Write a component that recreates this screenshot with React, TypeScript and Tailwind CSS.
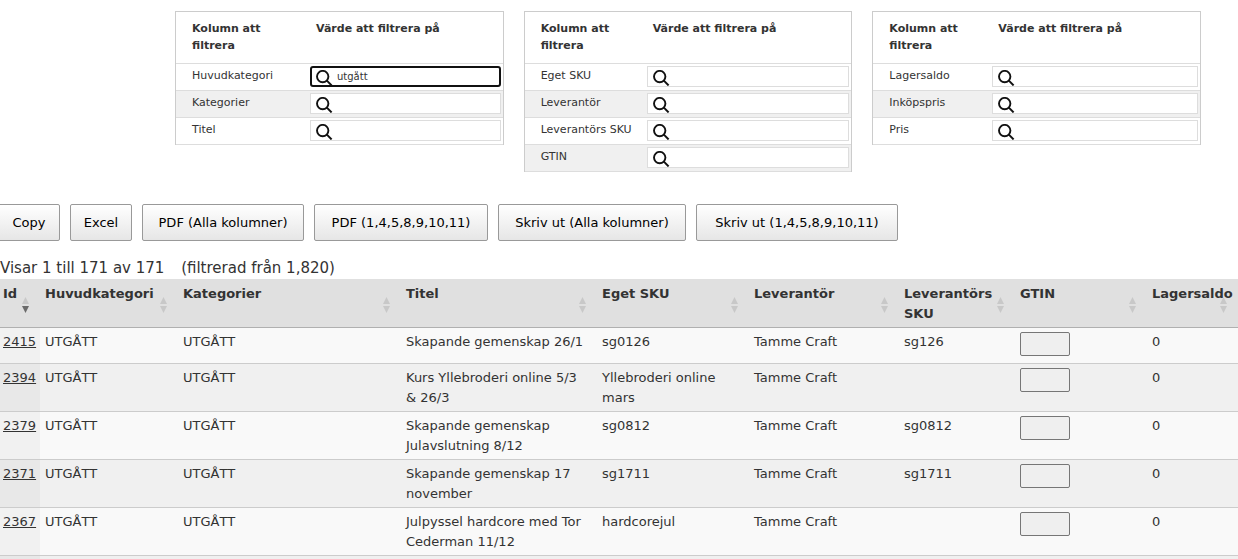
import clsx from 'clsx';

interface FilterField {
  id: string;
  label: string;
  value?: string;
  active?: boolean;
}

interface FilterTableProps {
  labelCol: string;
  fields: FilterField[];
}

interface Product {
  id: string;
  title: string;
  sku: string;
  supplierSku: string;
}

const mainFilters: FilterField[] = [
  { id: 'huvudkategori', label: 'Huvudkategori', value: 'utgått', active: true },
  { id: 'kategorier', label: 'Kategorier' },
  { id: 'titel', label: 'Titel' },
];

const skuFilters: FilterField[] = [
  { id: 'eget-sku', label: 'Eget SKU' },
  { id: 'leverantor', label: 'Leverantör' },
  { id: 'leverantors-sku', label: 'Leverantörs SKU' },
  { id: 'gtin', label: 'GTIN' },
];

const priceFilters: FilterField[] = [
  { id: 'lagersaldo', label: 'Lagersaldo' },
  { id: 'inkopspris', label: 'Inköpspris' },
  { id: 'pris', label: 'Pris' },
];

const exportButtons = [
  { label: 'Copy', width: 'min-w-[62px]' },
  { label: 'Excel', width: 'min-w-[62px]' },
  { label: 'PDF (Alla kolumner)', width: 'min-w-[162px]' },
  { label: 'PDF (1,4,5,8,9,10,11)', width: 'min-w-[174px]' },
  { label: 'Skriv ut (Alla kolumner)', width: 'min-w-[188px]' },
  { label: 'Skriv ut (1,4,5,8,9,10,11)', width: 'min-w-[202px]' },
];

const columns = [
  { label: 'Id', width: 'w-[42px]' },
  { label: 'Huvudkategori', width: 'w-[138px]' },
  { label: 'Kategorier', width: 'w-[223px]' },
  { label: 'Titel', width: 'w-[196px]' },
  { label: 'Eget SKU', width: 'w-[152px]' },
  { label: 'Leverantör', width: 'w-[150px]' },
  { label: 'Leverantörs SKU', width: 'w-[116px]' },
  { label: 'GTIN', width: 'w-[132px]' },
  { label: 'Lagersaldo', width: 'w-[91px]' },
];

const products: Product[] = [
  { id: '2415', title: 'Skapande gemenskap 26/1', sku: 'sg0126', supplierSku: 'sg126' },
  { id: '2394', title: 'Kurs Yllebroderi online 5/3 & 26/3', sku: 'Yllebroderi online mars', supplierSku: '' },
  { id: '2379', title: 'Skapande gemenskap Julavslutning 8/12', sku: 'sg0812', supplierSku: 'sg0812' },
  { id: '2371', title: 'Skapande gemenskap 17 november', sku: 'sg1711', supplierSku: 'sg1711' },
  { id: '2367', title: 'Julpyssel hardcore med Tor Cederman 11/12', sku: 'hardcorejul', supplierSku: '' },
];

function SearchIcon() {
  return (
    <svg
      className="pointer-events-none absolute top-1 left-1.5"
      width="17"
      height="16"
      viewBox="0 0 17 16"
      fill="none"
      stroke="#111"
    >
      <circle cx="6.7" cy="6.6" r="5.7" strokeWidth="1.9" />
      <path d="M10.6 10.4l5 5" strokeWidth="2" />
    </svg>
  );
}

function SortIcon({ sorted }: { sorted: boolean }) {
  return (
    <svg className="absolute top-[18px] right-2.5" width="9" height="16" viewBox="0 0 9 16">
      <path d="M4.5 0L8 7H1z" fill="#c8c8c8" />
      <path d="M1 9h7l-3.5 7z" fill={sorted ? '#6b6b6b' : '#c8c8c8'} />
    </svg>
  );
}

function FilterTable({ labelCol, fields }: FilterTableProps) {
  return (
    <table className="w-full table-fixed border-separate border-spacing-0 border-x border-t border-[#ccc] text-[11px] leading-[17px]">
      <colgroup>
        <col className={labelCol} />
        <col />
      </colgroup>
      <thead>
        <tr className="h-[52px] text-left align-top">
          <th className="border-b border-[#ddd] pt-2 pr-4 pl-4">Kolumn att filtrera</th>
          <th className="border-b border-[#ddd] pt-2 pl-1.5">Värde att filtrera på</th>
        </tr>
      </thead>
      <tbody>
        {fields.map((field) => (
          <tr key={field.id} className="h-[27px] align-top even:bg-[#f0f0f0]">
            <td className="border-b border-[#ddd] pt-[3px] pl-4 whitespace-nowrap">
              <label htmlFor={field.id}>{field.label}</label>
            </td>
            <td className="border-b border-[#ddd] pt-0.5 pr-0.5">
              <div className="relative">
                <input
                  id={field.id}
                  type="text"
                  defaultValue={field.value}
                  className={clsx(
                    'block h-[21px] w-full bg-white text-[10px] outline-none',
                    field.active ? 'rounded-[3px] border-2 border-[#111] pl-[25px]' : 'border border-[#ddd] pl-[26px]'
                  )}
                />
                <SearchIcon />
              </div>
            </td>
          </tr>
        ))}
      </tbody>
    </table>
  );
}

function ProductTable() {
  return (
    <table className="w-full table-fixed border-separate border-spacing-0 text-[13px] leading-5">
      <colgroup>
        {columns.map((col) => (
          <col key={col.label} className={col.width} />
        ))}
      </colgroup>
      <thead>
        <tr className="h-[49px] bg-[#e0e0e0] text-left align-top">
          {columns.map((col) => (
            <th key={col.label} className="relative border-b border-[#b0b0b0] pt-[5px] pl-[5px]">
              {col.label}
              <SortIcon sorted={col.label === 'Id'} />
            </th>
          ))}
        </tr>
      </thead>
      <tbody>
        {products.map((product) => (
          <tr
            key={product.id}
            className="h-9 align-top odd:bg-[#f9f9f9] even:bg-[#f0f0f0] *:border-b *:border-[#ccc] *:pt-1 *:pb-[3px] *:pl-[5px]"
          >
            <td className="bg-black/3">
              <a href={`#${product.id}`} className="underline">
                {product.id}
              </a>
            </td>
            <td>UTGÅTT</td>
            <td>UTGÅTT</td>
            <td className="pr-2.5">{product.title}</td>
            <td>{product.sku}</td>
            <td>Tamme Craft</td>
            <td>{product.supplierSku}</td>
            <td>
              <input
                type="text"
                aria-label={`GTIN ${product.id}`}
                className="block h-6 w-[50px] rounded-[2px] border border-[#767676] bg-[#efefef]"
              />
            </td>
            <td>0</td>
          </tr>
        ))}
        <tr className="h-9 bg-[#f0f0f0]">
          <td className="bg-black/3" />
          <td colSpan={8} />
        </tr>
      </tbody>
    </table>
  );
}

export default function App() {
  return (
    <div className="h-screen overflow-hidden bg-white font-['Verdana','DejaVu_Sans',sans-serif] text-[#333]">
      <div className="grid grid-cols-3 items-start gap-5 pt-[11px] pr-[37px] pl-[175px]">
        <FilterTable labelCol="w-[134px]" fields={mainFilters} />
        <FilterTable labelCol="w-[122px]" fields={skuFilters} />
        <FilterTable labelCol="w-[119px]" fields={priceFilters} />
      </div>

      <div className="-ml-0.5 pt-8">
        <div className="flex gap-2.5">
          {exportButtons.map((button) => (
            <button
              key={button.label}
              type="button"
              className={clsx(
                'h-[37px] rounded-[2px] border border-[#999] bg-linear-to-b from-white to-[#e6e6e6] px-3 text-[13px] whitespace-nowrap text-black',
                button.width
              )}
            >
              {button.label}
            </button>
          ))}
        </div>
        <p className="pt-4 pl-0.5 text-[15px] leading-[22px]">
          Visar 1 till 171 av 171 <span className="ml-3">(filtrerad från 1,820)</span>
        </p>
        <ProductTable />
      </div>
    </div>
  );
}
